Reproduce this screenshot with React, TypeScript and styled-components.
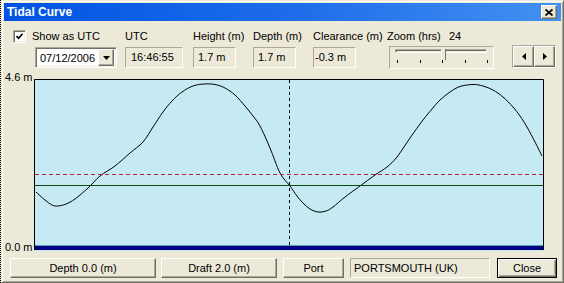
import React from "react";
import styled, { createGlobalStyle } from "styled-components";

const GlobalStyle = createGlobalStyle`
  html, body { margin: 0; padding: 0; background: #ECE9D8; }
  body { font-family: "Liberation Sans", Arial, sans-serif; font-size: 11px; color: #000; }
`;

const Page = styled.div`
  width: 564px;
  height: 283px;
  box-sizing: border-box;
  border-left: 1px dotted #000;
  display: flex;
  overflow: hidden;
`;

const Window = styled.div`
  flex: 1;
  box-sizing: border-box;
  display: flex;
  flex-direction: column;
  border: 1px solid;
  border-color: #ECE9D8 #716F64 #716F64 #ECE9D8;
  box-shadow: inset 1px 1px #fff, inset -1px -1px #ACA899;
  padding: 2px;
`;

const TitleBar = styled.div`
  height: 18px;
  flex: none;
  display: flex;
  align-items: center;
  justify-content: space-between;
  padding: 0 4px 0 3px;
  background: linear-gradient(90deg, #0153E3 0%, #1F6FEA 55%, #4391F2 100%);
  color: #fff;
  font-weight: bold;
  font-size: 12px;
`;

const raised = `
  box-sizing: border-box;
  background: #ECE9D8;
  border: 1px solid;
  border-color: #fff #716F64 #716F64 #fff;
  box-shadow: inset -1px -1px #ACA899;
`;

const TitleClose = styled.div`
  ${raised}
  width: 16px;
  height: 14px;
  display: flex;
  align-items: center;
  justify-content: center;
`;

const Controls = styled.div`
  display: flex;
  align-items: flex-start;
  margin-top: 9px;
  padding-left: 9px;
  height: 38px;
`;

const Group = styled.div<{ $w: number }>`
  width: ${(p) => p.$w}px;
  flex: none;
  display: flex;
  flex-direction: column;
  gap: 4px;
`;

const Label = styled.div`
  height: 13px;
  line-height: 13px;
  white-space: nowrap;
  display: flex;
  align-items: center;
`;

const Check = styled.div`
  width: 13px;
  height: 13px;
  box-sizing: border-box;
  background: #fff;
  border: 1px solid;
  border-color: #ACA899 #fff #fff #ACA899;
  box-shadow: inset 1px 1px #716F64, inset -1px -1px #F1EFE2;
  margin-right: 6px;
  display: flex;
  align-items: center;
  justify-content: center;
`;

const Combo = styled.div`
  margin-left: 22px;
  width: 82px;
  height: 21px;
  box-sizing: border-box;
  background: #fff;
  border: 1px solid;
  border-color: #ACA899 #fff #fff #ACA899;
  box-shadow: inset 1px 1px #716F64, inset -1px -1px #F1EFE2;
  display: flex;
  align-items: center;
  padding: 2px 2px 2px 4px;
`;

const ComboText = styled.div`
  flex: 1;
  white-space: nowrap;
`;

const DropBtn = styled.div`
  ${raised}
  width: 16px;
  height: 17px;
  display: flex;
  align-items: center;
  justify-content: center;
`;

const Field = styled.div<{ $w: number; $pl?: number }>`
  width: ${(p) => p.$w}px;
  height: 21px;
  box-sizing: border-box;
  border: 1px solid;
  border-color: #ACA899 #fff #fff #ACA899;
  padding-left: ${(p) => p.$pl ?? 4}px;
  line-height: 19px;
  white-space: nowrap;
`;

const ZoomName = styled.span`
  width: 62px;
`;

const SliderFrame = styled.div`
  position: relative;
  margin-left: 2px;
  margin-top: -1px;
  width: 105px;
  height: 23px;
  box-sizing: border-box;
  border: 1px solid;
  border-color: #ACA899 #fff #fff #ACA899;
  padding: 2px 5px 0 5px;
`;

const Groove = styled.div`
  height: 4px;
  box-sizing: border-box;
  border: 1px solid;
  border-color: #ACA899 #fff #fff #ACA899;
  box-shadow: inset 1px 1px #716F64;
  margin-right: 1px;
`;

const Ticks = styled.div`
  margin: 7px 0 0 2px;
  width: 91px;
  display: flex;
  justify-content: space-between;
`;

const Tick = styled.div`
  width: 1px;
  height: 3px;
  background: #000;
`;

const Thumb = styled.div`
  position: absolute;
  left: 51px;
  top: 2px;
  width: 3px;
  height: 11px;
  background: #ECE9D8;
  border-left: 1px solid #fff;
  border-right: 1px solid #716F64;
`;

const ArrowFrame = styled.div`
  margin-top: 15px;
  width: 44px;
  height: 23px;
  box-sizing: border-box;
  border: 1px solid;
  border-color: #ACA899 #fff #fff #ACA899;
  display: flex;
`;

const ArrowBtn = styled.div`
  ${raised}
  width: 21px;
  height: 21px;
  display: flex;
  align-items: center;
  justify-content: center;
`;

const ChartRow = styled.div`
  margin-top: 11px;
  display: grid;
  grid-template-columns: 30px 510px;
  height: 172px;
`;

const Axis = styled.div`
  display: flex;
  flex-direction: column;
  justify-content: space-between;
  margin: -8px 0 -3px 0;
  padding-left: 1px;
`;

const AxisLabel = styled.div`
  line-height: 13px;
  white-space: nowrap;
`;

const ChartSvg = styled.svg`
  display: block;
`;

const ButtonRow = styled.div`
  margin-top: 7px;
  display: flex;
  height: 20px;
`;

const Button = styled.div<{ $w: number; $ml: number; $def?: boolean }>`
  ${raised}
  width: ${(p) => p.$w}px;
  margin-left: ${(p) => p.$ml}px;
  height: 20px;
  display: flex;
  align-items: center;
  justify-content: center;
  ${(p) =>
    p.$def
      ? `border: 1px solid #000; box-shadow: inset 1px 1px #fff, inset -1px -1px #716F64, inset -2px -2px #ACA899;`
      : ""}
`;

const PortField = styled.div<{ $ml: number }>`
  width: 140px;
  margin-left: ${(p) => p.$ml}px;
  height: 20px;
  box-sizing: border-box;
  border: 1px solid;
  border-color: #ACA899 #fff #fff #ACA899;
  padding-left: 3px;
  line-height: 18px;
`;

const pts: [number, number][] = [
  [36, 192], [45, 200], [52, 205], [58, 206], [66, 204], [75, 199], [88, 188],
  [100, 176], [115, 166], [130, 153], [143, 142], [153, 127], [163, 112],
  [172, 101], [182, 92], [193, 86], [204, 84], [215, 84.5], [225, 88],
  [235, 95], [245, 106], [253, 116], [260, 126], [270, 148], [280, 173],
  [290, 186], [297, 196], [303, 203], [310, 209], [318, 212], [326, 211],
  [333, 207], [345, 197], [360, 186], [375, 175], [387, 167], [397, 157],
  [410, 138], [423, 120], [432, 109], [440, 100], [450, 92], [460, 86.5],
  [473, 84.5], [483, 86], [493, 90], [503, 97], [513, 107], [520, 116],
  [527, 127], [535, 142], [542, 156],
];

function smoothPath(p: [number, number][]): string {
  let d = `M${p[0][0]},${p[0][1]}`;
  for (let i = 0; i < p.length - 1; i++) {
    const p0 = p[Math.max(0, i - 1)];
    const p1 = p[i];
    const p2 = p[i + 1];
    const p3 = p[Math.min(p.length - 1, i + 2)];
    const c1x = p1[0] + (p2[0] - p0[0]) / 6;
    const c1y = p1[1] + (p2[1] - p0[1]) / 6;
    const c2x = p2[0] - (p3[0] - p1[0]) / 6;
    const c2y = p2[1] - (p3[1] - p1[1]) / 6;
    d += ` C${c1x.toFixed(2)},${c1y.toFixed(2)} ${c2x.toFixed(2)},${c2y.toFixed(2)} ${p2[0]},${p2[1]}`;
  }
  return d;
}

const TriDown = () => (
  <svg width="7" height="4" viewBox="0 0 7 4">
    <path d="M0 0H7L3.5 4Z" fill="#000" />
  </svg>
);

export default function App() {
  const curve = smoothPath(pts);
  return (
    <>
      <GlobalStyle />
      <Page>
        <Window>
          <TitleBar>
            <span>Tidal Curve</span>
            <TitleClose>
              <svg width="8" height="7" viewBox="0 0 8 7">
                <path d="M0.5 0.5L7.5 6.5M7.5 0.5L0.5 6.5" stroke="#000" strokeWidth="1.8" />
              </svg>
            </TitleClose>
          </TitleBar>

          <Controls>
            <Group $w={112}>
              <Label>
                <Check>
                  <svg width="7" height="7" viewBox="0 0 7 7">
                    <path d="M0.5 3L2.5 5.2L6.5 0.8" stroke="#000" strokeWidth="1.6" fill="none" />
                  </svg>
                </Check>
                Show as UTC
              </Label>
              <Combo>
                <ComboText>07/12/2006</ComboText>
                <DropBtn>
                  <TriDown />
                </DropBtn>
              </Combo>
            </Group>
            <Group $w={68}>
              <Label>UTC</Label>
              <Field $w={58} $pl={5}>16:46:55</Field>
            </Group>
            <Group $w={60}>
              <Label>Height (m)</Label>
              <Field $w={43}>1.7 m</Field>
            </Group>
            <Group $w={60}>
              <Label>Depth (m)</Label>
              <Field $w={43}>1.7 m</Field>
            </Group>
            <Group $w={74}>
              <Label>Clearance (m)</Label>
              <Field $w={43} $pl={1}>-0.3 m</Field>
            </Group>
            <Group $w={125}>
              <Label>
                <ZoomName>Zoom (hrs)</ZoomName>
                <span>24</span>
              </Label>
              <SliderFrame>
                <Groove />
                <Ticks>
                  <Tick />
                  <Tick />
                  <Tick />
                  <Tick />
                  <Tick />
                </Ticks>
                <Thumb />
              </SliderFrame>
            </Group>
            <ArrowFrame>
              <ArrowBtn>
                <svg width="4" height="7" viewBox="0 0 4 7">
                  <path d="M4 0V7L0 3.5Z" fill="#000" />
                </svg>
              </ArrowBtn>
              <ArrowBtn>
                <svg width="4" height="7" viewBox="0 0 4 7">
                  <path d="M0 0V7L4 3.5Z" fill="#000" />
                </svg>
              </ArrowBtn>
            </ArrowFrame>
          </Controls>

          <ChartRow>
            <Axis>
              <AxisLabel>4.6 m</AxisLabel>
              <AxisLabel>0.0 m</AxisLabel>
            </Axis>
            <ChartSvg width="510" height="172" viewBox="0 0 510 172">
              <rect x="0" y="0" width="510" height="172" fill="#C5EAF3" />
              <g transform="translate(-34,-79)">
                <line x1="289.5" y1="80" x2="289.5" y2="245" stroke="#000" strokeWidth="1" strokeDasharray="3 3" />
                <path d={curve} fill="none" stroke="#000" strokeWidth="1" />
                <line x1="35" y1="185.5" x2="543" y2="185.5" stroke="#0B4A14" strokeWidth="1" />
                <line x1="35" y1="174.5" x2="543" y2="174.5" stroke="#C0262C" strokeWidth="1" strokeDasharray="4 3" />
              </g>
              <rect x="0" y="166" width="510" height="1" fill="#5E9DB8" />
              <rect x="0" y="167" width="510" height="4" fill="#000080" />
              <path d="M0.5 171V0.5H509.5V171" fill="none" stroke="#000" strokeWidth="1" />
            </ChartSvg>
          </ChartRow>

          <ButtonRow>
            <Button $w={146} $ml={6}>Depth 0.0 (m)</Button>
            <Button $w={116} $ml={5}>Draft 2.0 (m)</Button>
            <Button $w={61} $ml={6}>Port</Button>
            <PortField $ml={6}>PORTSMOUTH (UK)</PortField>
            <Button $w={60} $ml={7} $def>Close</Button>
          </ButtonRow>
        </Window>
      </Page>
    </>
  );
}
